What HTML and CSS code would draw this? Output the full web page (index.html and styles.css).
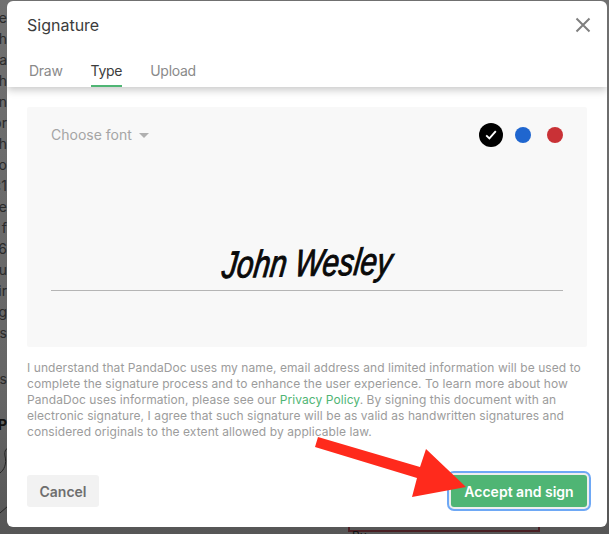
FILE: index.html
```html
<!DOCTYPE html>
<html lang="en">
<head>
<meta charset="utf-8">
<title>Signature</title>
<link rel="stylesheet" href="styles.css">
</head>
<body>
<div class="backdrop">
  <div class="peek peek-left">
    <span>Ge</span><span>th</span><span>Pa</span><span>th</span><span>n</span><span>or</span><span>th</span><span>o</span><span>:1</span><span>e</span><span>f</span><span>6</span><span>u</span><span>ir</span><span>ag</span><span>lis</span><span class="gap">ss</span><span class="bold">P</span>
  </div>
  <svg class="peek-scribble" width="8" height="70" viewBox="0 0 8 70"><path d="M0 25C4 22 7 16 5 8C4 2 7 0 8 1M0 65L8 58" fill="none" stroke="#222" stroke-width="1"/></svg>
  <div class="peek-box"></div>
  <div class="peek-label">Pu</div>
</div>

<section class="modal">
  <header class="modal-head">
    <div class="title-row">
      <h1>Signature</h1>
      <svg class="close" width="16" height="16" viewBox="0 0 16 16"><path d="M1.5 1.5L14.5 14.5M14.5 1.5L1.5 14.5" stroke="#7f7f7f" stroke-width="2" fill="none"/></svg>
    </div>
    <nav class="tabs">
      <span class="tab">Draw</span>
      <span class="tab active">Type</span>
      <span class="tab">Upload</span>
    </nav>
  </header>

  <div class="modal-body">
    <div class="panel">
      <div class="panel-top">
        <div class="font-pick">Choose font <i class="caret"></i></div>
        <div class="swatches">
          <span class="swatch black"><svg width="12" height="10" viewBox="0 0 12 10"><path d="M1.2 5.4L4.4 8.4L10.8 1.2" stroke="#fff" stroke-width="1.9" fill="none"/></svg></span>
          <span class="swatch blue"></span>
          <span class="swatch red"></span>
        </div>
      </div>
      <div class="sign-line"><span class="sign-text">John Wesley</span></div>
    </div>
    <p class="legal">I understand that PandaDoc uses my name, email address and limited information will be used to complete the signature process and to enhance the user experience. To learn more about how PandaDoc uses information, please see our <a href="#">Privacy Policy</a>. By signing this document with an electronic signature, I agree that such signature will be as valid as handwritten signatures and considered originals to the extent allowed by applicable law.</p>
    <div class="actions">
      <button class="btn cancel">Cancel</button>
      <button class="btn accept">Accept and sign</button>
    </div>
  </div>
</section>

<svg class="arrow" width="609" height="534" viewBox="0 0 609 534"><polygon points="318,437 420,467 426,449 466,487 412,497 417,478 315,447" fill="#ff2a1c"/></svg>
</body>
</html>
```
FILE: styles.css
```css
* { box-sizing: border-box; }
html, body { margin: 0; height: 534px; overflow: hidden; }
body { background: #6a6a6a; font-family: Inter, "Liberation Sans", sans-serif; position: relative; width: 609px; }

.backdrop { position: absolute; inset: 0; overflow: hidden; background: linear-gradient(#707070, #656565 75%, #565656 100%); }
.peek { position: absolute; left: 0; top: 7px; width: 7px; overflow: hidden; display: flex; flex-direction: column; align-items: flex-end; font-size: 14px; line-height: 21px; color: #2a2a2a; }
.peek span { white-space: nowrap; }
.peek .gap { margin-top: 25px; }
.peek .bold { margin-top: 25px; font-weight: 700; color: #111; }
.peek-scribble { position: absolute; left: 0; top: 448px; }
.peek-box { position: absolute; left: 348px; top: 500px; width: 192px; height: 32px; border: 2px solid #4a2024; }
.peek-label { position: absolute; left: 352px; top: 528px; font-size: 12px; color: #111; }

.modal { position: absolute; left: 7px; top: 1px; width: 600px; height: 526px; background: #fff; border-radius: 6px; overflow: hidden; }
.modal-head { height: 86px; padding: 0 20px; box-shadow: 0 3px 8px rgba(0, 0, 0, .22); position: relative; }
.title-row { display: flex; justify-content: space-between; align-items: center; padding-top: 11px; height: 36px; }
.title-row h1 { margin: 0; font-size: 16px; font-weight: 400; color: #3c3c3c; line-height: 22px; }
.close { margin-right: -4px; }
.tabs { display: flex; gap: 28px; margin-top: 24px; padding-left: 2px; }
.tab { font-size: 14px; line-height: 20px; height: 26px; color: #8a8a8a; letter-spacing: -.02em; }
.tab.active { color: #3c3c3c; border-bottom: 2px solid #4fb574; }

.modal-body { padding: 20px 20px 0; }
.panel { height: 240px; background: #f8f8f8; border-radius: 2px; padding: 16px 24px 0; display: flex; flex-direction: column; }
.panel-top { display: flex; justify-content: space-between; align-items: center; height: 24px; }
.font-pick { font-size: 14px; color: #a5a5a5; display: flex; align-items: center; gap: 7px; margin-top: -2px; }
.caret { width: 0; height: 0; border-left: 5px solid transparent; border-right: 5px solid transparent; border-top: 5px solid #b0b0b0; margin-top: 2px; }
.swatches { display: flex; align-items: center; gap: 16px; }
.swatch { width: 16px; height: 16px; border-radius: 50%; display: flex; align-items: center; justify-content: center; }
.swatch.black { width: 24px; height: 24px; background: #000; margin-right: -4px; }
.swatch.blue { background: #1f66cf; }
.swatch.red { background: #c93136; }
.sign-line { margin-top: 96px; height: 48px; border-bottom: 1px solid #b5b5b5; text-align: center; }
.sign-text { display: inline-block; font-family: "Liberation Sans", sans-serif; font-style: italic; font-weight: 400; font-size: 38px; line-height: 40px; color: #0a0a0a; -webkit-text-stroke: 1px #0a0a0a; transform: scaleX(.78) skewX(-10deg) rotate(-1deg); }

.legal { margin: 13px 0 0; font-size: 12px; line-height: 16px; color: #9c9c9c; letter-spacing: .006em; }
.legal a { color: #4fb574; text-decoration: none; }
.actions { display: flex; justify-content: space-between; margin-top: 35px; }
.btn { height: 32px; border: 0; border-radius: 3px; font-family: inherit; font-size: 14px; font-weight: 600; padding: 0; }
.cancel { width: 72px; background: #f2f2f2; color: #6e6e6e; }
.accept { width: 136px; background: #4fb574; color: #fff; box-shadow: 0 0 0 2px #eee, 0 0 0 4px #6ea8f5; }

.arrow { position: absolute; left: 0; top: 0; pointer-events: none; }
```
